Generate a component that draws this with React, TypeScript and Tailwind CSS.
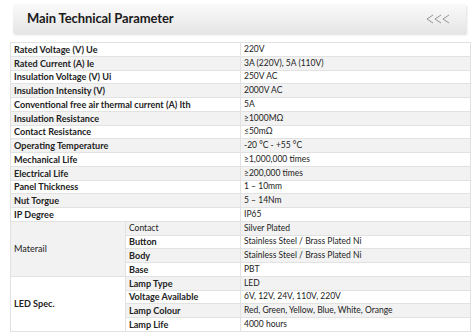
import React from "react";

const single: [string, string][] = [
  ["Rated Voltage (V) Ue", "220V"],
  ["Rated Current (A) Ie", "3A (220V), 5A (110V)"],
  ["Insulation Voltage (V) Ui", "250V AC"],
  ["Insulation Intensity (V)", "2000V AC"],
  ["Conventional free air thermal current (A) Ith", "5A"],
  ["Insulation Resistance", "≥1000MΩ"],
  ["Contact Resistance", "≤50mΩ"],
  ["Operating Temperature", "-20 °C - +55 °C"],
  ["Mechanical Life", "≥1,000,000 times"],
  ["Electrical Life", "≥200,000 times"],
  ["Panel Thickness", "1 – 10mm"],
  ["Nut Torgue", "5 – 14Nm"],
  ["IP Degree", "IP65"],
];

const groups: { name: string; bold: boolean; bg: string; rows: [string, string, boolean][] }[] = [
  {
    name: "Materail",
    bold: false,
    bg: "bg-[#f2f2f2]",
    rows: [
      ["Contact", "Silver Plated", false],
      ["Button", "Stainless Steel / Brass Plated Ni", true],
      ["Body", "Stainless Steel / Brass Plated Ni", true],
      ["Base", "PBT", true],
    ],
  },
  {
    name: "LED Spec.",
    bold: true,
    bg: "bg-white",
    rows: [
      ["Lamp Type", "LED", true],
      ["Voltage Available", "6V, 12V, 24V, 110V, 220V", true],
      ["Lamp Colour", "Red, Green, Yellow, Blue, White, Orange", true],
      ["Lamp Life", "4000 hours", true],
    ],
  },
];

export default function App() {
  let idx = 0;
  const rowBg = () => {
    const bg = idx % 2 === 1 ? "bg-[#f2f2f2]" : "bg-white";
    idx++;
    return bg;
  };
  const cell = "border border-[#e2e2e2] px-[3px] py-0 h-[13.76px] leading-[11px] align-middle";
  const lab = "text-[9.1px]";
  const val = "text-[8.5px]";
  return (
    <div
      className="w-[474px] h-[336px] bg-white text-[#222] overflow-hidden"
      style={{ fontFamily: "Lato, 'Open Sans', sans-serif" }}
    >
      <div className="pt-[4px] pl-[13px] pr-[8px]">
        <div className="h-[29px] flex items-center justify-between pl-[14px] pr-[16px] bg-gradient-to-b from-[#fafafa] to-[#e6e6e6] shadow-[1px_2px_2px_rgba(0,0,0,0.12)]">
          <span className="text-[13px] font-bold text-[#1a1a1a] tracking-[-0.1px]">Main Technical Parameter</span>
          <svg width="24" height="10" viewBox="0 0 24 10" fill="none" stroke="#8a8a8a" strokeWidth="0.9">
            <path d="M7 1 L1 5 L7 9" />
            <path d="M15 1 L9 5 L15 9" />
            <path d="M23 1 L17 5 L23 9" />
          </svg>
        </div>
      </div>
      <div className="pl-[10px] pt-[9px]">
        <table className="border-collapse w-[460px] table-fixed">
          <colgroup>
            <col className="w-[115px]" />
            <col className="w-[115px]" />
            <col className="w-[230px]" />
          </colgroup>
          <tbody>
            {single.map(([k, v]) => {
              const bg = rowBg();
              return (
                <tr key={k} className={bg}>
                  <td colSpan={2} className={`${cell} ${lab} font-bold whitespace-nowrap`}>{k}</td>
                  <td className={`${cell} ${val}`}>{v}</td>
                </tr>
              );
            })}
            {groups.map((g) =>
              g.rows.map(([k, v, b], i) => {
                const bg = rowBg();
                return (
                  <tr key={g.name + k} className={bg}>
                    {i === 0 && (
                      <td rowSpan={4} className={`${cell} ${lab} ${g.bg} ${g.bold ? "font-bold" : ""}`}>
                        {g.name}
                      </td>
                    )}
                    <td className={`${cell} ${b ? `${lab} font-bold` : val}`}>{k}</td>
                    <td className={`${cell} ${val}`}>{v}</td>
                  </tr>
                );
              })
            )}
          </tbody>
        </table>
      </div>
    </div>
  );
}
